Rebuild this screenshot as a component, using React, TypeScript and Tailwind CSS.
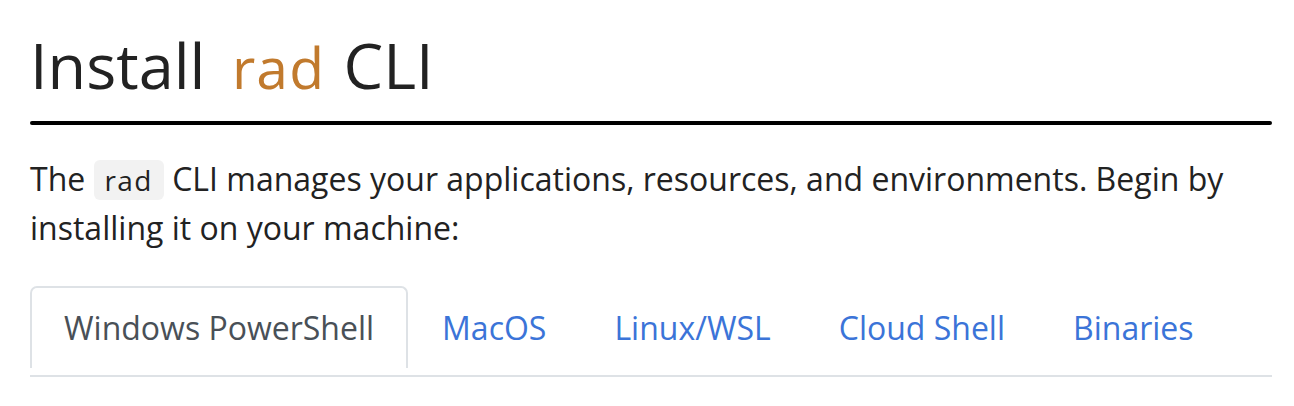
export default function App() {
  const tabs = ["MacOS", "Linux/WSL", "Cloud Shell", "Binaries"];
  return (
    <div className="min-h-[406px] w-[1294px] bg-white pl-[30px] pr-[22px] pt-[25px] font-['Open_Sans',sans-serif]">
      <h1 className="text-[63px] leading-[79px] font-normal text-[#222222] pb-[17px]">
        Install{" "}
        <code className="pl-[10px] pr-[2px] font-['Open_Sans',sans-serif] text-[57px] leading-[0] font-normal tracking-[0.02em] text-[#c17a2d]">
          rad
        </code>{" "}
        CLI
      </h1>
      <div className="h-[4px] rounded-full bg-black" />
      <p className="mt-[30px] text-[32px] leading-[48px] text-[#222222]">
        The{" "}
        <code className="rounded-[6px] bg-[#f2f2f2] px-[11px] py-[1px] font-['Open_Sans',sans-serif] text-[28px] tracking-[0.05em]">
          rad
        </code>{" "}
        CLI manages your applications, resources, and environments. Begin by installing it on your machine:
      </p>
      <div className="mt-[34px]">
        <div className="flex items-end">
          <div className="rounded-t-[7px] border-2 border-b-0 border-[#dee2e6] px-[32px] py-[16px] text-[32px] leading-[48px] text-[#495057]">
            Windows PowerShell
          </div>
          {tabs.map((t) => (
            <div key={t} className="border-2 border-transparent border-b-0 px-[32px] py-[16px] text-[32px] leading-[48px] text-[#3b74d8]">
              {t}
            </div>
          ))}
        </div>
        <div className="mt-[7px] h-[2px] bg-[#dee2e6]" />
      </div>
    </div>
  );
}
